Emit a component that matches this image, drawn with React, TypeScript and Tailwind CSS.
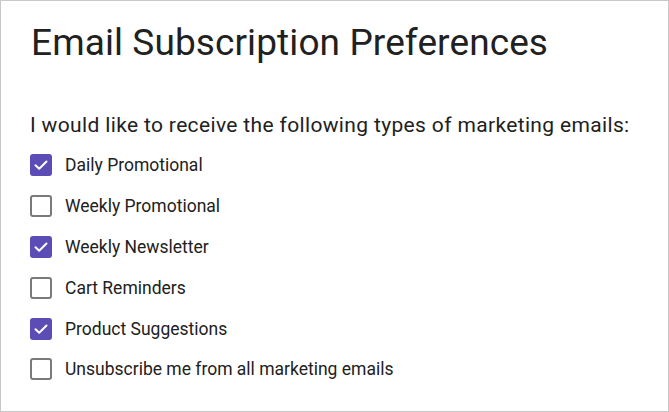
import React from "react";

const items: { label: string; checked: boolean }[] = [
  { label: "Daily Promotional", checked: true },
  { label: "Weekly Promotional", checked: false },
  { label: "Weekly Newsletter", checked: true },
  { label: "Cart Reminders", checked: false },
  { label: "Product Suggestions", checked: true },
  { label: "Unsubscribe me from all marketing emails", checked: false },
];

function Box({ checked }: { checked: boolean }) {
  if (checked) {
    return (
      <div className="w-[22px] h-[22px] rounded-[3px] bg-[#5b4cb6] flex items-center justify-center shrink-0">
        <svg width="22" height="22" viewBox="0 0 22 22">
          <path d="M5.5 11.2 L9.2 14.8 L16.5 7.5" fill="none" stroke="#ffffff" strokeWidth="2" strokeLinecap="round" strokeLinejoin="round" />
        </svg>
      </div>
    );
  }
  return <div className="w-[22px] h-[22px] rounded-[3px] border-2 border-[#7a7a7a] bg-white shrink-0" />;
}

export default function App() {
  return (
    <div
      className="w-[669px] h-[412px] border border-[#c8c8c8] bg-white text-[#212121] pl-[29px]"
      style={{ fontFamily: "Roboto, 'Noto Sans', sans-serif" }}
    >
      <h1 className="text-[37px] leading-[44px] tracking-[0.1px] pt-[20px] pl-[1px]">Email Subscription Preferences</h1>
      <p className="text-[21px] leading-[28px] tracking-[0.35px] mt-[46px]">I would like to receive the following types of marketing emails:</p>
      <div className="mt-[6px] flex flex-col">
        {items.map((it) => (
          <div key={it.label} className="h-[40.8px] flex items-center gap-[13px]">
            <Box checked={it.checked} />
            <span className="text-[17.5px] leading-[22px]">{it.label}</span>
          </div>
        ))}
      </div>
    </div>
  );
}
